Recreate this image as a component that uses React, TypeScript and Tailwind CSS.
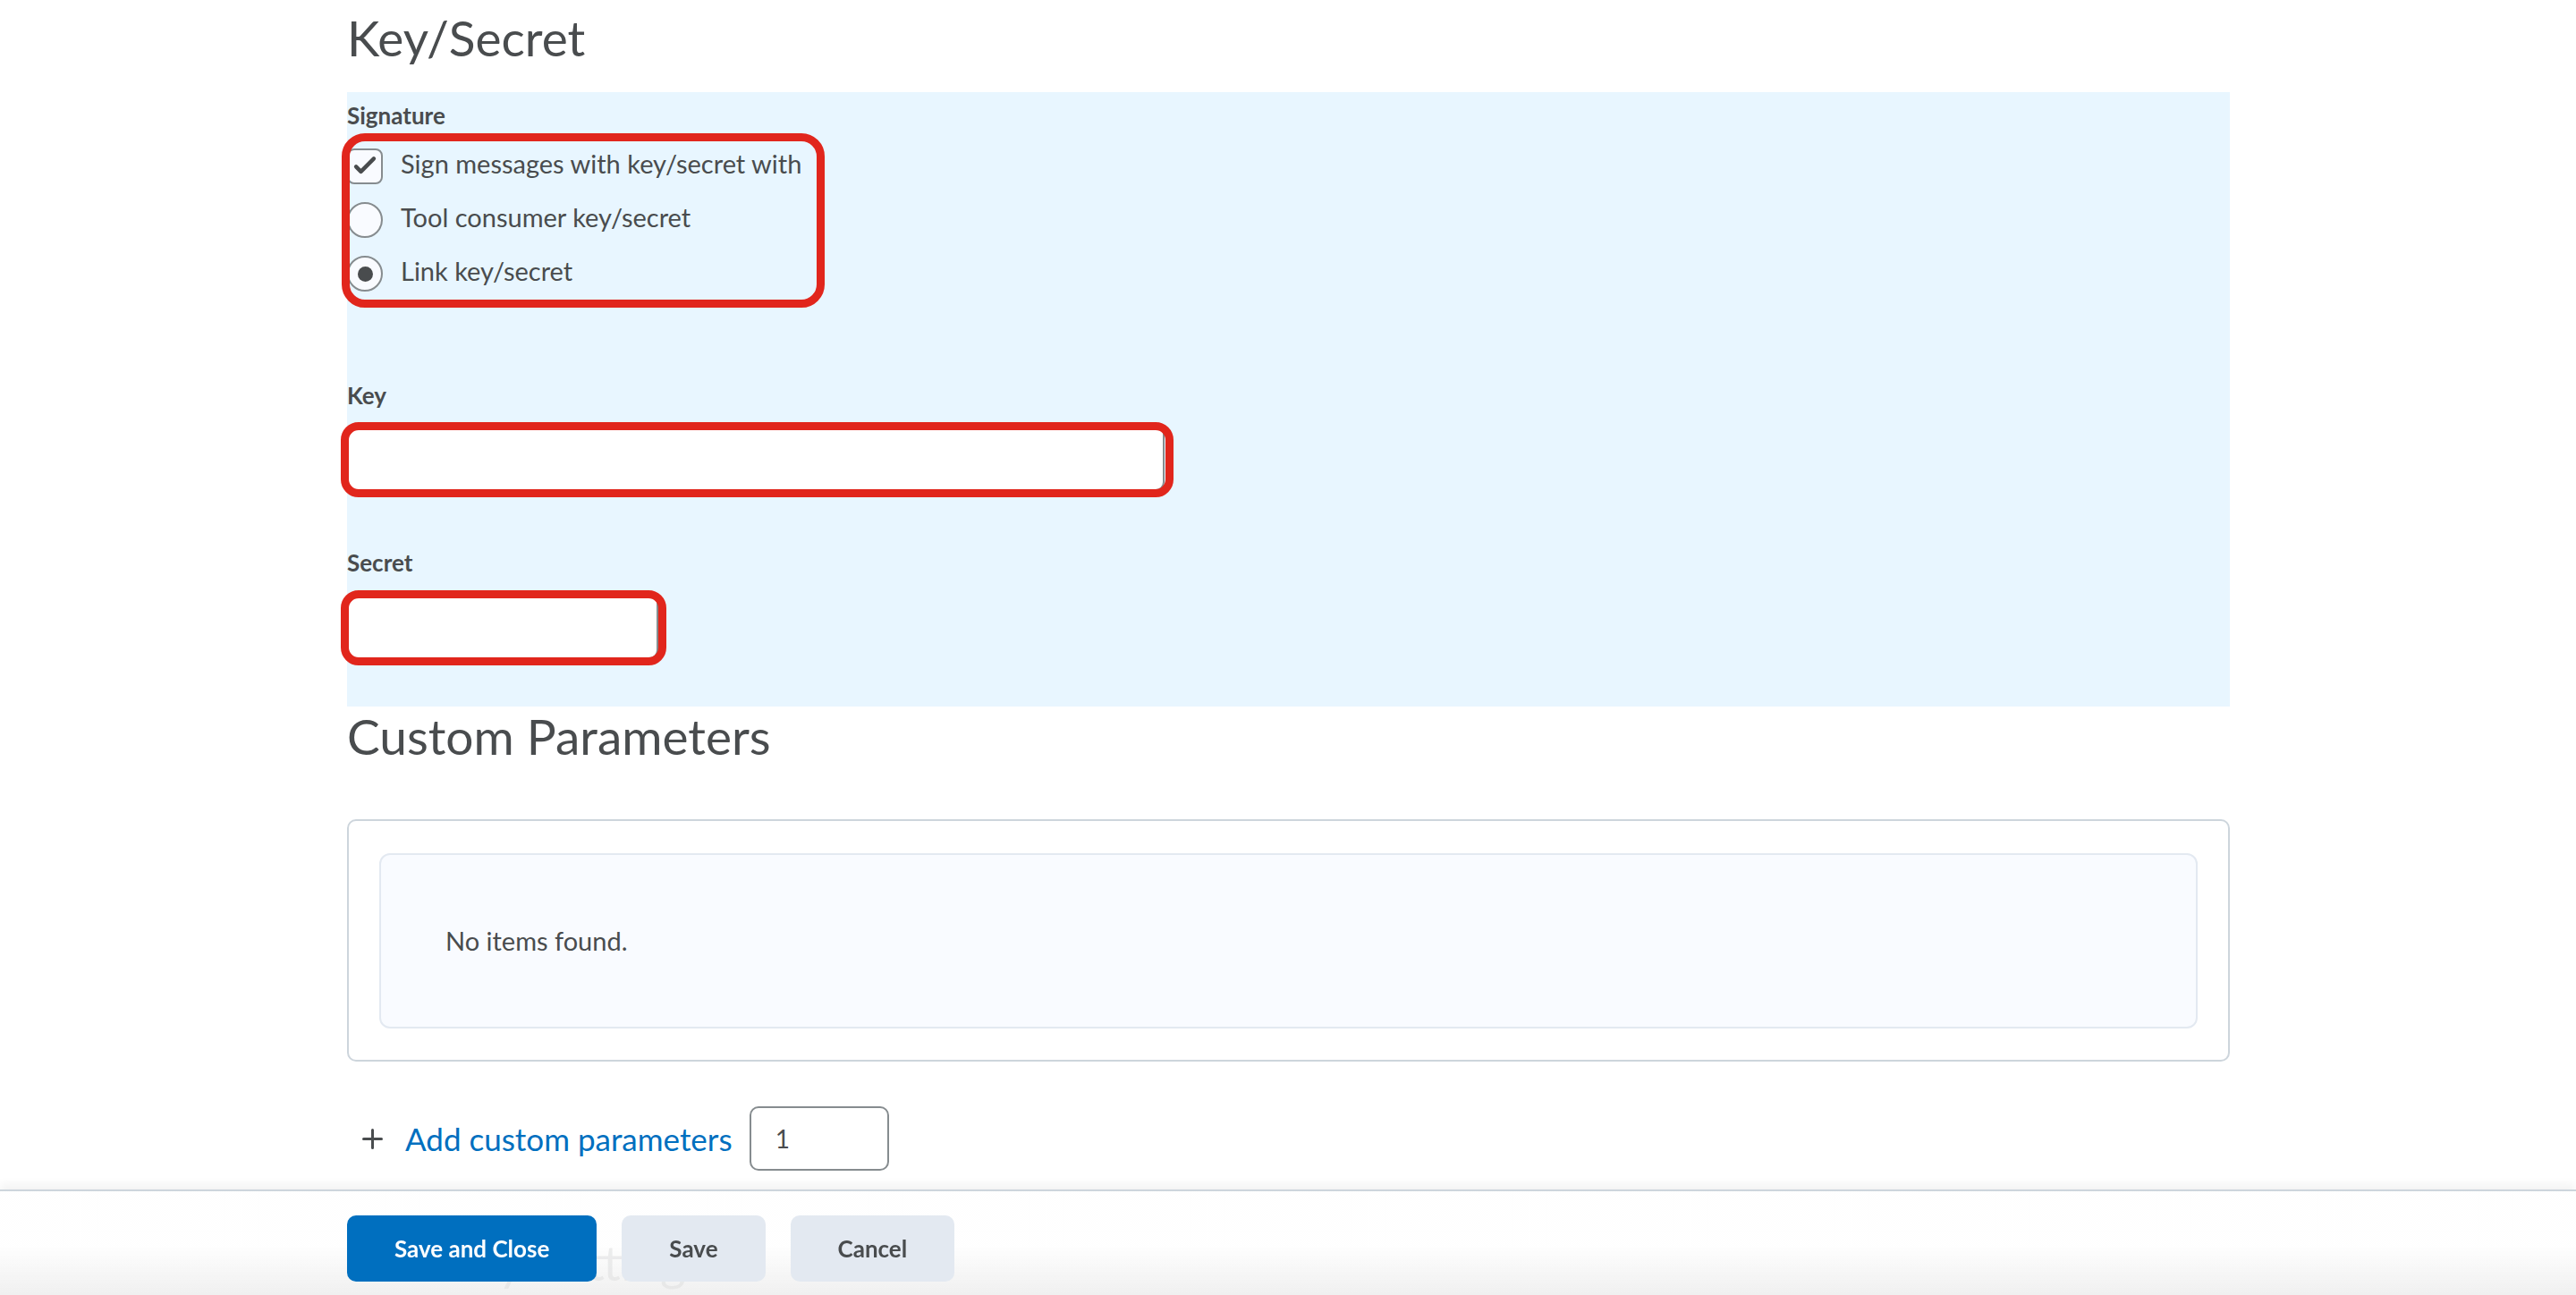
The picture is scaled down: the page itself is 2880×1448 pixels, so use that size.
import React from 'react';

const RedMark = ({ className }: { className: string }) => (
  <div className={`pointer-events-none absolute border-[9px] border-[#e1261c] ${className}`} />
);

const Checkbox = () => (
  <span className="flex h-[40px] w-[40px] shrink-0 items-center justify-center rounded-[8px] border-2 border-[#868c8f] bg-[#f9fbff]">
    <svg width="40" height="40" viewBox="0 0 40 40" fill="none">
      <path d="M9 20.5 L15 26.5 L31 10.5" stroke="#494c4e" strokeWidth="5" strokeLinecap="round" strokeLinejoin="round" />
    </svg>
  </span>
);

const Radio = ({ checked }: { checked?: boolean }) => (
  <span className="flex h-[40px] w-[40px] shrink-0 items-center justify-center rounded-full border-2 border-[#868c8f] bg-[#f9fbff]">
    {checked && <span className="h-[17px] w-[17px] rounded-full bg-[#494c4e]" />}
  </span>
);

const OptionRow = ({ control, label }: { control: React.ReactNode; label: string }) => (
  <div className="flex h-[60px] items-center gap-[20px]">
    {control}
    <span className="mb-[6px] text-[29px] leading-[1.2]">{label}</span>
  </div>
);

export default function App() {
  return (
    <div className="relative min-h-screen overflow-hidden bg-white font-['Lato',sans-serif] text-[#494c4e]">
      <div className="ml-[388px] w-[2105px] pb-[200px]">
        <h2 className="pt-[9px] text-[55px] leading-[1.2] font-normal">Key/Secret</h2>

        {/* Key / secret panel */}
        <section className="mt-[28px] bg-[#e8f6ff] pt-[11px] pb-[53px]">
          <div className="text-[26px] leading-[30px] font-bold">Signature</div>
          <div className="relative mt-[12px]">
            <OptionRow control={<Checkbox />} label="Sign messages with key/secret with" />
            <OptionRow control={<Radio />} label="Tool consumer key/secret" />
            <OptionRow control={<Radio checked />} label="Link key/secret" />
            <RedMark className="-left-[6px] -top-[7px] h-[195px] w-[540px] rounded-[26px]" />
          </div>

          <div className="mt-[91px] text-[26px] leading-[30px] font-bold">Key</div>
          <div className="relative mt-[18px] h-[74px] w-[914px] rounded-[10px] border-2 border-[#868c8f] bg-white">
            <RedMark className="-left-[9px] -top-[5px] h-[84px] w-[931px] rounded-[20px]" />
          </div>

          <div className="mt-[65px] text-[26px] leading-[30px] font-bold">Secret</div>
          <div className="relative mt-[19px] h-[74px] w-[348px] rounded-[10px] border-2 border-[#868c8f] bg-white">
            <RedMark className="-left-[9px] -top-[5px] h-[84px] w-[364px] rounded-[20px]" />
          </div>
        </section>

        <h2 className="text-[55px] leading-[1.2] font-normal">Custom Parameters</h2>

        <div className="mt-[60px] rounded-[10px] border-2 border-[#cdd5dc] px-[34px] pt-[36px] pb-[35px]">
          <div className="flex h-[196px] items-center rounded-[12px] border-2 border-[#e3e9f1] bg-[#f9fbff] pl-[72px] text-[29px] leading-[1.2]">
            No items found.
          </div>
        </div>

        <div className="mt-[50px] flex h-[72px] items-center">
          <svg className="ml-[17px]" width="23" height="23" viewBox="0 0 23 23">
            <path d="M11.5 1.5 V21.5 M1.5 11.5 H21.5" stroke="#494c4e" strokeWidth="3" strokeLinecap="round" />
          </svg>
          <a className="ml-[25px] text-[35px] leading-[1.2] text-[#006fbf]" href="#">
            Add custom parameters
          </a>
          <div className="ml-[19px] flex h-[72px] w-[156px] items-center rounded-[10px] border-2 border-[#868c8f] bg-white pl-[27px] text-[28px]">
            1
          </div>
        </div>

        <h2 className="mt-[69px] text-[55px] leading-[1.2] font-normal">Security Settings</h2>
      </div>

      {/* Floating button bar */}
      <div className="fixed right-0 bottom-0 left-0 flex h-[118px] gap-[28px] border-t-2 border-[#cdd5dc] bg-linear-to-b from-white/90 via-white/90 to-[#efefef]/95 pt-[27px] pl-[388px] shadow-[0_-6px_10px_rgba(0,0,0,0.05)]">
        <button className="h-[74px] rounded-[10px] bg-[#006fbf] px-[53px] text-[26px] font-bold text-white">
          Save and Close
        </button>
        <button className="h-[74px] rounded-[10px] bg-[#e3e9f1] px-[53px] text-[26px] font-bold text-[#494c4e]">
          Save
        </button>
        <button className="h-[74px] rounded-[10px] bg-[#e3e9f1] px-[53px] text-[26px] font-bold text-[#494c4e]">
          Cancel
        </button>
      </div>
    </div>
  );
}
